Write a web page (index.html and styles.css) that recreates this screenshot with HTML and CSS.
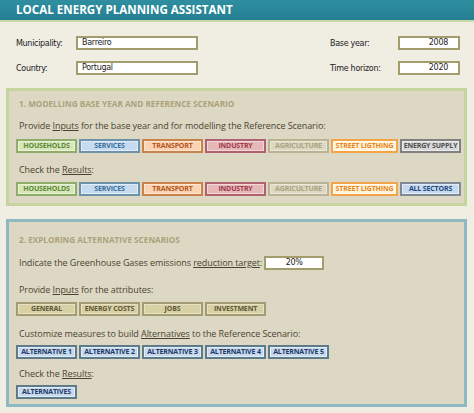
FILE: index.html
```html
<!DOCTYPE html>
<html>
<head>
<meta charset="utf-8">
<link rel="stylesheet" href="styles.css">
</head>
<body>
<div class="header">LOCAL ENERGY PLANNING ASSISTANT</div>
<div class="form">
  <div class="frow">
    <span class="flabel">Municipality:</span><span class="field wide">Barreiro</span>
    <span class="spacer"></span>
    <span class="flabel rlabel">Base year:</span><span class="field num">2008</span>
  </div>
  <div class="frow">
    <span class="flabel">Country:</span><span class="field wide">Portugal</span>
    <span class="spacer"></span>
    <span class="flabel rlabel">Time horizon:</span><span class="field num">2020</span>
  </div>
</div>

<div class="section s1">
  <div class="title">1. MODELLING BASE YEAR AND REFERENCE SCENARIO</div>
  <div class="line l1">Provide <u>Inputs</u> for the base year and for modelling the Reference Scenario:</div>
  <div class="btns b1">
    <span class="btn hh">HOUSEHOLDS</span>
    <span class="btn sv">SERVICES</span>
    <span class="btn tr">TRANSPORT</span>
    <span class="btn in">INDUSTRY</span>
    <span class="btn ag">AGRICULTURE</span>
    <span class="btn sl">STREET LIGTHING</span>
    <span class="btn es">ENERGY SUPPLY</span>
  </div>
  <div class="line l2">Check the <u>Results</u>:</div>
  <div class="btns b2">
    <span class="btn hh">HOUSEHOLDS</span>
    <span class="btn sv">SERVICES</span>
    <span class="btn tr">TRANSPORT</span>
    <span class="btn in">INDUSTRY</span>
    <span class="btn ag">AGRICULTURE</span>
    <span class="btn sl">STREET LIGTHING</span>
    <span class="btn as">ALL SECTORS</span>
  </div>
</div>

<div class="section s2">
  <div class="title t2">2. EXPLORING ALTERNATIVE SCENARIOS</div>
  <div class="line l3">Indicate the Greenhouse Gases emissions <u>reduction target</u>:<span class="field target">20%</span></div>
  <div class="line l4">Provide <u>Inputs</u> for the attributes:</div>
  <div class="btns b3">
    <span class="btn at">GENERAL</span>
    <span class="btn at">ENERGY COSTS</span>
    <span class="btn at">JOBS</span>
    <span class="btn at">INVESTMENT</span>
  </div>
  <div class="line l5">Customize measures to build <u>Alternatives</u> to the Reference Scenario:</div>
  <div class="btns b4">
    <span class="btn al">ALTERNATIVE 1</span>
    <span class="btn al">ALTERNATIVE 2</span>
    <span class="btn al">ALTERNATIVE 3</span>
    <span class="btn al">ALTERNATIVE 4</span>
    <span class="btn al">ALTERNATIVE 5</span>
  </div>
  <div class="line l6">Check the <u>Results</u>:</div>
  <div class="btns b5">
    <span class="btn al">ALTERNATIVES</span>
  </div>
</div>
</body>
</html>
```

FILE: styles.css
```css
html, body {
  margin: 0;
  padding: 0;
  background: #f0ede2;
  width: 474px;
  height: 413px;
  overflow: hidden;
  font-family: "Open Sans", "Liberation Sans", sans-serif;
}
.header {
  height: 20px;
  background: linear-gradient(#2f8fa0, #237f91);
  color: #ffffff;
  font-weight: bold;
  font-size: 11.6px;
  line-height: 20px;
  padding-left: 16px;
  border-bottom: 2px solid #c8daa6;
}
.form {
  padding: 14px 14px 0 16px;
  height: 52px;
}
.frow {
  display: flex;
  align-items: center;
  height: 14px;
  margin-bottom: 11px;
  font-family: "DejaVu Sans", sans-serif;
  font-size: 8px;
  color: #222;
  letter-spacing: -0.3px;
}
.flabel { width: 60px; }
.rlabel { width: 68px; }
.spacer { flex: 1; }
.field {
  box-sizing: border-box;
  height: 14px;
  line-height: 10px;
  background: #fff;
  border: 2px solid #a39c6c;
  font-family: "DejaVu Sans", sans-serif;
  font-size: 8px;
  color: #222;
  padding: 0 4px;
  letter-spacing: -0.3px;
}
.wide { width: 122px; }
.num { width: 62px; text-align: right; padding-right: 10px; }
.section {
  margin: 0 7px 0 6px;
  background: #ddd8c3;
  border: 3px solid #c6d49e;
  padding-left: 7px;
  color: #4b4433;
  font-size: 9px;
}
.s1 { margin-top: 0; padding-top: 6px; padding-bottom: 7px; }
.s2 {
  margin-top: 13px;
  border-color: #8fb9c1;
  padding-top: 11px;
  padding-bottom: 5px;
}
.title {
  height: 14px;
  line-height: 14px;
  font-weight: bold;
  font-size: 8.2px;
  color: #a9a37c;
  padding-left: 3px;
}
.line {
  display: block;
  height: 14px;
  line-height: 14px;
  padding-left: 3px;
  white-space: nowrap;
  letter-spacing: -0.08px;
}
.l1 { margin-top: 8px; }
.l2 { margin-top: 10px; }
.l3 { margin-top: 9px; }
.l4 { margin-top: 13px; }
.l5 { margin-top: 11px; }
.l6 { margin-top: 8px; }
.btns {
  display: flex;
  gap: 2px;
}
.b1 { margin-top: 6px; }
.b2 { margin-top: 5px; }
.b3 { margin-top: 5px; }
.b4 { margin-top: 4px; }
.b5 { margin-top: 4px; }
.btn {
  box-sizing: border-box;
  width: 61px;
  height: 14px;
  line-height: 10px;
  text-align: center;
  font-weight: bold;
  font-size: 7px;
  border: 2px solid;
  white-space: nowrap;
  letter-spacing: -0.15px;
}
.hh { background: #d8e6bc; border-color: #8fad68; color: #5b8a36; box-shadow: inset 0 0 0 1px #eaf2da; }
.sv { background: #c6daf0; border-color: #6f92ab; color: #3b6f9c; box-shadow: inset 0 0 0 1px #e2ecf8; }
.tr { background: #fbd3b2; border-color: #c98348; color: #b4561e; box-shadow: inset 0 0 0 1px #fde6d4; }
.in { background: #e6b9b9; border-color: #b06270; color: #a0384a; box-shadow: inset 0 0 0 1px #f2d8d8; }
.ag { background: #ddd8c2; border-color: #bab393; color: #aaa383; box-shadow: inset 0 0 0 1px #ece8d8; }
.sl { width: 67px; background: #fff3d8; border-color: #f2a446; color: #e6861e; box-shadow: inset 0 0 0 1px #fffaf0; }
.es { background: #d9d9d9; border-color: #808080; color: #505050; box-shadow: inset 0 0 0 1px #ececec; }
.as { background: #c6d9ef; border-color: #7f8a94; color: #1f4a7c; box-shadow: inset 0 0 0 1px #e2ecf8; }
.at { background: #d9d1a6; border-color: #a39c72; color: #5f5838; box-shadow: inset 0 0 0 1px #e8e2c4; }
.al { background: #c6d9ef; border-color: #5f7a88; color: #1f3a64; box-shadow: inset 0 0 0 1px #e2ecf8; }
.target {
  display: inline-block;
  vertical-align: top;
  width: 60px;
  margin-left: 2px;
  text-align: center;
  line-height: 10px;
}
```
